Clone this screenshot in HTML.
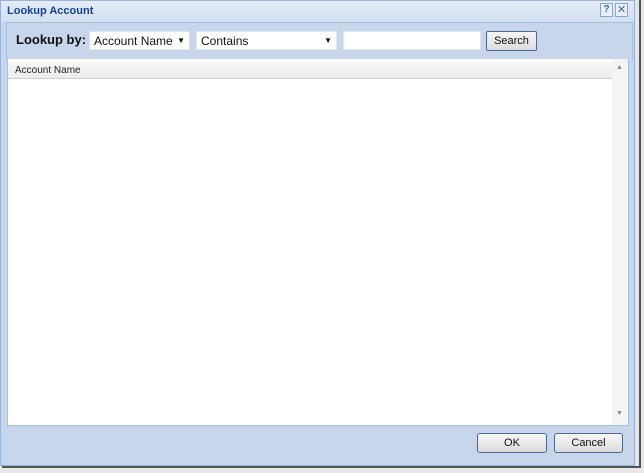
<!DOCTYPE html>
<html><head><style>
body{margin:0;width:644px;height:473px;background:#fff;position:relative;overflow:hidden;font-family:"Liberation Sans",sans-serif}
div{position:absolute;box-sizing:border-box}
</style></head><body>
<div style="left:634px;top:0;width:10px;height:473px;background:#e6e6e6"></div>
<div style="left:639px;top:0;width:2px;height:468px;background:#555"></div>
<div style="left:0;top:466px;width:644px;height:7px;background:#e8e8e8"></div>
<div style="left:2px;top:466px;width:639px;height:2px;background:#555"></div>
<div style="left:0;top:0;width:635px;height:466px;background:#c7d6ea;border:1px solid #99b3d6"></div>
<div style="left:1px;top:1px;width:633px;height:21px;background:linear-gradient(#e4ecf7,#d2e0f1)"></div>
<div style="left:7px;top:5px;font-size:11px;font-weight:bold;color:#15428b">Lookup Account</div>
<div style="left:600px;top:3px;width:13px;height:14px;background:#e8f0fa;border:1px solid #8aa6cc;font-size:10px;font-weight:bold;color:#3a6aa8;text-align:center;line-height:12px">?</div>
<div style="left:615px;top:3px;width:13px;height:14px;background:#e8f0fa;border:1px solid #8aa6cc;font-size:11px;color:#3a6aa8;text-align:center;line-height:12px">✕</div>
<div style="left:6px;top:22px;width:627px;height:38px;border-top:1px solid #a8c0e0;border-left:1px solid #a8c0e0;border-right:1px solid #a8c0e0"></div>
<div style="left:16px;top:32px;font-size:13px;font-weight:bold;color:#111">Lookup by:</div>
<div style="left:89px;top:31px;width:101px;height:19px;background:#fff;border:1px solid #dde5ef;font-size:12px;padding:2px 4px;color:#111">Account Name<span style="position:absolute;right:4px;top:4px;font-size:8px">▼</span></div>
<div style="left:196px;top:31px;width:141px;height:19px;background:#fff;border:1px solid #dde5ef;font-size:12px;padding:2px 4px;color:#111">Contains<span style="position:absolute;right:4px;top:4px;font-size:8px">▼</span></div>
<div style="left:343px;top:31px;width:138px;height:19px;background:#fff;border:1px solid #dde5ef"></div>
<div style="left:486px;top:31px;width:51px;height:20px;border:1px solid #4a6a95;border-radius:2px;background:linear-gradient(#f6f6f6,#dcdcdc);font-size:11px;text-align:center;line-height:18px;color:#111">Search</div>
<div style="left:8px;top:59px;width:620px;height:366px;background:#fff"></div>
<div style="left:8px;top:62px;width:604px;height:17px;background:linear-gradient(#f7f7f7,#ececec);border-bottom:1px solid #d0d0d0;font-size:10px;padding:3px 7px;color:#222">Account Name</div>
<div style="left:612px;top:59px;width:16px;height:366px;background:#f4f4f4"></div>
<div style="left:616px;top:64px;font-size:7px;color:#888">▲</div>
<div style="left:616px;top:410px;font-size:7px;color:#888">▼</div>
<div style="left:7px;top:59px;width:1px;height:367px;background:#a8c0e0"></div>
<div style="left:628px;top:59px;width:1px;height:367px;background:#a8c0e0"></div>
<div style="left:7px;top:425px;width:622px;height:1px;background:#a8c0e0"></div>
<div style="left:477px;top:433px;width:70px;height:20px;border:1px solid #4a6a95;border-radius:3px;background:linear-gradient(#f6f6f6,#dcdcdc);font-size:11px;text-align:center;line-height:18px;color:#111">OK</div>
<div style="left:554px;top:433px;width:69px;height:20px;border:1px solid #4a6a95;border-radius:3px;background:linear-gradient(#f6f6f6,#dcdcdc);font-size:11px;text-align:center;line-height:18px;color:#111">Cancel</div>
</body></html>
